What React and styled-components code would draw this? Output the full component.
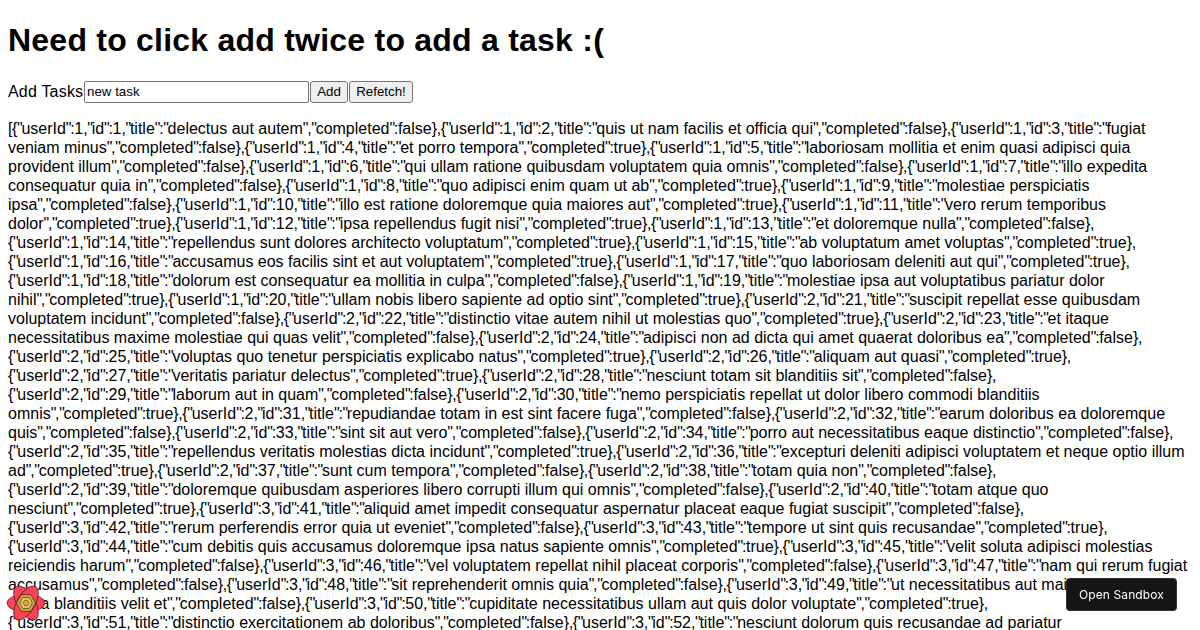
import React from "react";
import styled, { createGlobalStyle } from "styled-components";

const Global = createGlobalStyle`
  html { overflow: hidden; height: 630px; background: #fff; }
  body { margin: 0 8px; font-family: "Liberation Sans", Arial, sans-serif; font-size: 16px; color: #000; }
`;
const Title = styled.h1`
  font-size: 32px; font-weight: 700; margin: 22.44px 0 21.44px; letter-spacing: 0.23px;
`;
const Form = styled.div`
  display: flex; align-items: center; gap: 1px; height: 22px;
`;
const Label = styled.label`
  font-size: 16px; letter-spacing: 0.2px; width: 75px; white-space: nowrap;
`;
const TaskInput = styled.input`
  width: 225px; height: 22px; box-sizing: border-box; font: 13.33px "Liberation Sans", Arial, sans-serif;
  padding: 1px 2px; border: 1px solid #767676; border-radius: 2px; color: #000; background: #fff; outline: none;
`;
const Button = styled.button`
  font: 13.33px "Liberation Sans", Arial, sans-serif; height: 22px; width: ${(p) => p.$w}px; padding: 0; box-sizing: border-box;
  background: #efefef; border: 1px solid #767676; border-radius: 3px; color: #000;
`;
const Output = styled.p`
  margin: 16px 0; line-height: 19px;
`;
const Quote = styled.span`
  letter-spacing: -1.3px;
`;
const Punct = styled.span`
  letter-spacing: -0.4px;
`;
const DevTools = styled.button`
  position: fixed; left: 6px; bottom: 7px; width: 40px; height: 40px; padding: 0; border: 0; background: none;
  display: block;
`;
const OpenSandbox = styled.a`
  position: fixed; left: 1066px; top: 578px; width: 111px; height: 33px; box-sizing: border-box; display: flex; align-items: center;
  justify-content: center; background: #151515; color: #fff; border: 1px solid rgba(255,255,255,.12); border-radius: 4px;
  font: 12px Inter, "Liberation Sans", sans-serif; letter-spacing: 0.1px;
`;

const raw = [
[1,"delectus aut autem",0],[1,"quis ut nam facilis et officia qui",0],[1,"fugiat veniam minus",0],[1,"et porro tempora",1],
[1,"laboriosam mollitia et enim quasi adipisci quia provident illum",0],[1,"qui ullam ratione quibusdam voluptatem quia omnis",0],
[1,"illo expedita consequatur quia in",0],[1,"quo adipisci enim quam ut ab",1],[1,"molestiae perspiciatis ipsa",0],
[1,"illo est ratione doloremque quia maiores aut",1],[1,"vero rerum temporibus dolor",1],[1,"ipsa repellendus fugit nisi",1],
[1,"et doloremque nulla",0],[1,"repellendus sunt dolores architecto voluptatum",1],[1,"ab voluptatum amet voluptas",1],
[1,"accusamus eos facilis sint et aut voluptatem",1],[1,"quo laboriosam deleniti aut qui",1],[1,"dolorum est consequatur ea mollitia in culpa",0],
[1,"molestiae ipsa aut voluptatibus pariatur dolor nihil",1],[1,"ullam nobis libero sapiente ad optio sint",1],
[2,"suscipit repellat esse quibusdam voluptatem incidunt",0],[2,"distinctio vitae autem nihil ut molestias quo",1],
[2,"et itaque necessitatibus maxime molestiae qui quas velit",0],[2,"adipisci non ad dicta qui amet quaerat doloribus ea",0],
[2,"voluptas quo tenetur perspiciatis explicabo natus",1],[2,"aliquam aut quasi",1],[2,"veritatis pariatur delectus",1],
[2,"nesciunt totam sit blanditiis sit",0],[2,"laborum aut in quam",0],[2,"nemo perspiciatis repellat ut dolor libero commodi blanditiis omnis",1],
[2,"repudiandae totam in est sint facere fuga",0],[2,"earum doloribus ea doloremque quis",0],[2,"sint sit aut vero",0],
[2,"porro aut necessitatibus eaque distinctio",0],[2,"repellendus veritatis molestias dicta incidunt",1],
[2,"excepturi deleniti adipisci voluptatem et neque optio illum ad",1],[2,"sunt cum tempora",0],[2,"totam quia non",0],
[2,"doloremque quibusdam asperiores libero corrupti illum qui omnis",0],[2,"totam atque quo nesciunt",1],
[3,"aliquid amet impedit consequatur aspernatur placeat eaque fugiat suscipit",0],[3,"rerum perferendis error quia ut eveniet",0],
[3,"tempore ut sint quis recusandae",1],[3,"cum debitis quis accusamus doloremque ipsa natus sapiente omnis",1],
[3,"velit soluta adipisci molestias reiciendis harum",0],[3,"vel voluptatem repellat nihil placeat corporis",0],
[3,"nam qui rerum fugiat accusamus",0],[3,"sit reprehenderit omnis quia",0],[3,"ut necessitatibus aut maiores debitis officia blanditiis velit et",0],
[3,"cupiditate necessitatibus ullam aut quis dolor voluptate",1],[3,"distinctio exercitationem ab doloribus",0],
[3,"nesciunt dolorum quis recusandae ad pariatur ratione",0],
];
const tasks = raw.map(([userId, title, c], i) => ({ userId, id: i + 1, title, completed: !!c }));
const parts = JSON.stringify(tasks).split(/("|[:,{}[\]])/).filter(Boolean);

const hex = (r) => {
  const c = 20;
  const h = (r * Math.sqrt(3)) / 2;
  return `M${c - r} ${c}L${c - r / 2} ${c - h}H${c + r / 2}L${c + r} ${c}L${c + r / 2} ${c + h}H${c - r / 2}Z`;
};

function Logo() {
  return (
    <svg viewBox="0 0 40 40" width="40" height="40">
      <g fill="#ff4154" stroke="#3a1a30" strokeWidth="0.7">
        <ellipse cx="20" cy="20" rx="19" ry="9" />
        <ellipse cx="20" cy="20" rx="19" ry="9" transform="rotate(60 20 20)" />
        <ellipse cx="20" cy="20" rx="19" ry="9" transform="rotate(120 20 20)" />
      </g>
      <path d={hex(9.6)} fill="#d8a840" stroke="#3a2a30" strokeWidth="0.8" />
      <path d={hex(6.4)} fill="#e8c46a" stroke="#7a5a20" strokeWidth="1" />
      <path d={hex(3)} fill="#d8a840" stroke="#7a5a20" strokeWidth="0.8" />
    </svg>
  );
}

export default function App() {
  return (
    <>
      <Global />
      <Title>Need to click add twice to add a task :(</Title>
      <Form>
        <Label>Add Tasks</Label>
        <TaskInput defaultValue="new task" />
        <Button $w={38}>Add</Button>
        <Button $w={64}>Refetch!</Button>
      </Form>
      <Output>
        {parts.map((p, i) =>
          p === '"' ? <Quote key={i}>{p}</Quote> : /^[:,{}[\]]$/.test(p) ? <Punct key={i}>{p}</Punct> : p
        )}
      </Output>
      <DevTools aria-label="Open React Query Devtools"><Logo /></DevTools>
      <OpenSandbox>Open Sandbox</OpenSandbox>
    </>
  );
}
